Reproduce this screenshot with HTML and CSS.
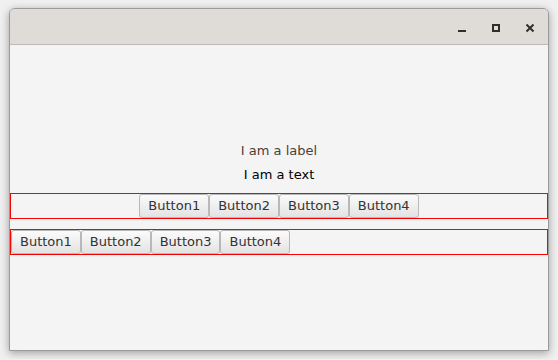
FILE: index.html
```html
<!DOCTYPE html>
<html>
<head>
  <meta charset="UTF-8">
  <title>Demo</title>
  <link rel="stylesheet" href="styles.css">
</head>
<body>
<div class="window">
  <!-- Title bar -->
  <div class="titlebar">
    <span class="ctl">
      <svg width="10" height="10" viewBox="0 0 10 10"><rect x="1" y="6" width="8" height="2" fill="#2e2e2e"/></svg>
    </span>
    <span class="ctl">
      <svg width="10" height="10" viewBox="0 0 10 10"><rect x="2" y="1" width="6" height="6" fill="none" stroke="#2e2e2e" stroke-width="2"/></svg>
    </span>
    <span class="ctl">
      <svg width="10" height="10" viewBox="0 0 10 10"><path d="M1.5 0.5 L8.5 7.5 M8.5 0.5 L1.5 7.5" stroke="#2e2e2e" stroke-width="2"/></svg>
    </span>
  </div>
  <!-- Content -->
  <div class="content">
    <div class="label">I am a label</div>
    <div class="text">I am a text</div>
    <div class="row center">
      <button class="btn">Button1</button>
      <button class="btn">Button2</button>
      <button class="btn">Button3</button>
      <button class="btn">Button4</button>
    </div>
    <div class="row">
      <button class="btn">Button1</button>
      <button class="btn">Button2</button>
      <button class="btn">Button3</button>
      <button class="btn">Button4</button>
    </div>
  </div>
</div>
</body>
</html>
```

FILE: styles.css
```css
body {
  margin: 0;
  padding: 8px 9px;
  background: #f0f0f0;
  font-family: "DejaVu Sans", sans-serif;
  font-size: 13px;
}

.window {
  width: 538px;
  height: 341px;
  border: 1px solid #9a9a9a;
  border-radius: 6px 6px 0 0;
  background: #f4f4f4;
  box-shadow: 0 2px 9px rgba(0, 0, 0, 0.35);
  display: flex;
  flex-direction: column;
  overflow: hidden;
}

  /*Title bar*/
.titlebar {
  height: 35px;
  background: #dfdcd8;
  border-bottom: 1px solid #bdbab6;
  display: flex;
  justify-content: flex-end;
  align-items: center;
  padding-right: 13px;
  gap: 24px;
}

.ctl {
  display: flex;
  width: 10px;
  height: 10px;
  margin-top: 4px;
}

  /*Content*/
.content {
  flex: 1;
  display: flex;
  flex-direction: column;
  justify-content: center;
  gap: 10px;
  padding-top: 3px;
}

.label,
.text {
  text-align: center;
  line-height: 16px;
}

.label {
  color: #4a4038;
  margin-bottom: -2px;
}

.text {
  color: #000;
}

.row {
  display: flex;
  border: 1px solid #ff0000;
  height: 24px;
}

.row.center {
  justify-content: center;
}

.btn {
  font-family: "DejaVu Sans", sans-serif;
  font-size: 13px;
  line-height: 16px;
  color: #333;
  height: 24px;
  padding: 3px 8px;
  margin: 0;
  border: 1px solid #b8b8b8;
  border-radius: 3px;
  background: linear-gradient(#fbfbfb, #e3e3e3);
  box-shadow: 0 1px 0 rgba(0, 0, 0, 0.06);
}
```
